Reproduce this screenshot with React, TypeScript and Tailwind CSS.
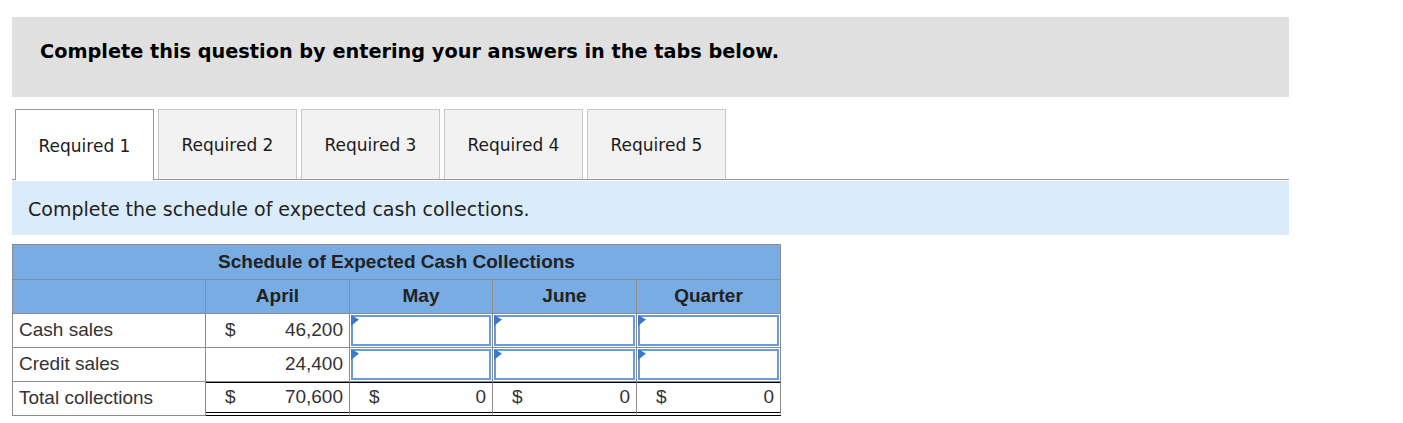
const tabs = ["Required 1", "Required 2", "Required 3", "Required 4", "Required 5"];

const verdana = "font-['DejaVu_Sans',Verdana,sans-serif]";

function InputCell() {
  return (
    <div className="relative h-[34px] border-r border-b border-[#8c8c8c] p-[1px]">
      <div className="h-full w-full border-2 border-[#6b9ad6] bg-white" />
      <svg className="absolute left-[1px] top-[1px]" width="8" height="11" viewBox="0 0 8 11">
        <polygon points="0,0 8,4.5 0,11" fill="#3b78c7" />
      </svg>
    </div>
  );
}

function AmountCell({ dollar, value, total }: { dollar?: boolean; value: string; total?: boolean }) {
  return (
    <div
      className={
        "flex h-[34px] items-center justify-between border-r border-[#8c8c8c] pl-[19px] pr-[6px] " +
        (total ? "border-t border-t-black border-b-4 border-b-black border-double" : "border-b")
      }
    >
      <span>{dollar ? "$" : ""}</span>
      <span>{value}</span>
    </div>
  );
}

export default function App() {
  return (
    <div className="bg-white pl-[12px] pt-[17px] pb-[8px]">
      <div className={`h-[80px] w-[1277px] bg-[#e0e0e0] pl-[28px] pt-[21px] text-[19.3px] font-bold text-black ${verdana}`}>
        Complete this question by entering your answers in the tabs below.
      </div>

      <div className={`mt-[12px] flex w-[1277px] items-end gap-[4px] border-b border-[#999] pl-[3px] ${verdana}`}>
        {tabs.map((t, i) => (
          <div
            key={t}
            className={
              "flex w-[139px] items-center justify-center pt-[3px] text-[17px] text-[#1a1a1a] " +
              (i === 0
                ? "-mb-px h-[71px] border border-b-0 border-[#999] bg-white"
                : "h-[70px] border border-b-0 border-[#c8c8c8] bg-[#f2f2f2]")
            }
          >
            {t}
          </div>
        ))}
      </div>

      <div className={`mt-[1px] flex h-[54px] w-[1277px] items-center bg-[#daecf9] pl-[16px] pt-[2px] text-[19px] text-[#222] ${verdana}`}>
        Complete the schedule of expected cash collections.
      </div>

      <div className="mt-[9px] grid w-[769px] grid-cols-[193px_144px_143px_144px_144px] border-l border-t border-[#8c8c8c] font-['Liberation_Sans',Arial,sans-serif] text-[19px] text-[#333]">
        <div className="col-span-5 flex h-[35px] items-center justify-center border-r border-b border-[#8c8c8c] bg-[#78ace3] font-bold text-[#222]">
          Schedule of Expected Cash Collections
        </div>

        <div className="h-[34px] border-r border-b border-[#8c8c8c] bg-[#78ace3]" />
        {["April", "May", "June", "Quarter"].map((m) => (
          <div
            key={m}
            className="flex h-[34px] items-center justify-center border-r border-b border-[#8c8c8c] bg-[#78ace3] font-bold text-[#222]"
          >
            {m}
          </div>
        ))}

        <div className="flex h-[34px] items-center border-r border-b border-[#8c8c8c] pl-[6px]">Cash sales</div>
        <AmountCell dollar value="46,200" />
        <InputCell />
        <InputCell />
        <InputCell />

        <div className="flex h-[34px] items-center border-r border-b border-[#8c8c8c] pl-[6px]">Credit sales</div>
        <AmountCell value="24,400" />
        <InputCell />
        <InputCell />
        <InputCell />

        <div className="flex h-[34px] items-center border-r border-b border-[#8c8c8c] pl-[6px]">Total collections</div>
        <AmountCell dollar value="70,600" total />
        <AmountCell dollar value="0" total />
        <AmountCell dollar value="0" total />
        <AmountCell dollar value="0" total />
      </div>
    </div>
  );
}
